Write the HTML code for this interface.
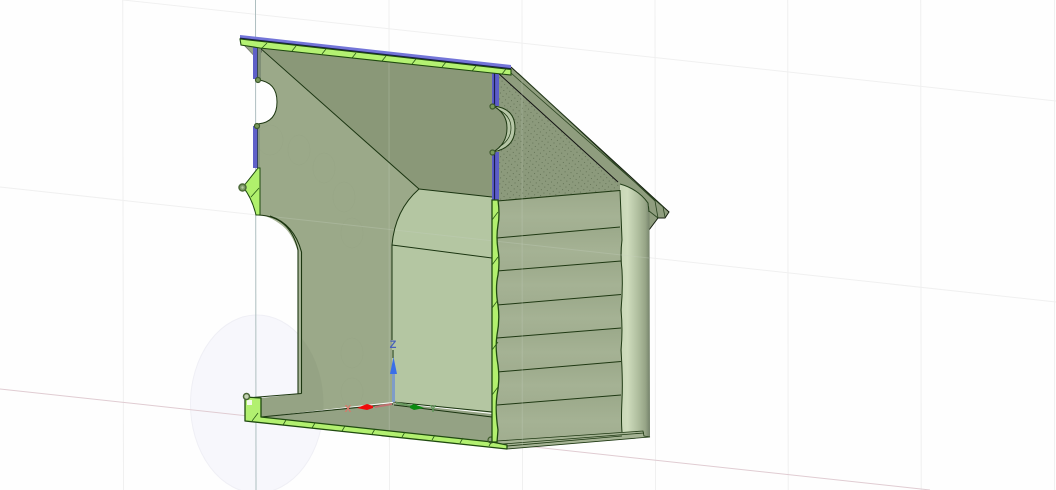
<!DOCTYPE html>
<html><head><meta charset="utf-8"><style>
html,body{margin:0;padding:0;background:#fefefe;width:1056px;height:490px;overflow:hidden}
svg{display:block}
text{font-family:"Liberation Sans",sans-serif;font-weight:bold}
</style></head><body>
<svg width="1056" height="490" viewBox="0 0 1056 490" xmlns="http://www.w3.org/2000/svg">
<defs>
<linearGradient id="post" x1="0" x2="1" y1="0" y2="0">
<stop offset="0" stop-color="#c8d6b6"/><stop offset=".25" stop-color="#cfdcbd"/><stop offset=".6" stop-color="#b0bf9f"/><stop offset=".85" stop-color="#96a486"/><stop offset="1" stop-color="#74826a"/>
</linearGradient>
<linearGradient id="sid" x1="0" x2="0" y1="0" y2="1">
<stop offset="0" stop-color="#9ba98a"/><stop offset=".55" stop-color="#a5b294"/><stop offset="1" stop-color="#a0ad8f"/>
</linearGradient>
<pattern id="dots" width="6" height="6" patternUnits="userSpaceOnUse" patternTransform="rotate(8)">
<rect width="6" height="6" fill="#8c9a7c"/><rect x="1" y="1" width="1" height="1" fill="#667558"/><rect x="4" y="4" width="1" height="1" fill="#667558"/>
</pattern>
<clipPath id="wallclip"><path d="M258 47L419 189Q395 210 392 245L392 402L261 417L261 398L298 394L298 250Q290 215 258 215L258 124Q277 122 277 102Q277 82 258 80Z"/></clipPath>
</defs>
<rect width="1056" height="490" fill="#fefefe"/>
<ellipse cx="257" cy="404" rx="66.500" ry="89" fill="#f7f7fc" stroke="#efeff5" stroke-width="1"/>
<g stroke="#f0f0f0" stroke-width="1" fill="none">
<line x1="122.700" y1="0" x2="123.500" y2="490"/>
<line x1="389" y1="0" x2="389.500" y2="490"/>
<line x1="522" y1="0" x2="522.500" y2="490"/>
<line x1="655" y1="0" x2="655.500" y2="490"/>
<line x1="787.700" y1="0" x2="788.200" y2="490"/>
<line x1="920.700" y1="0" x2="921.200" y2="490"/>
<line x1="1054.500" y1="0" x2="1054.500" y2="490"/>
<line x1="123" y1="0" x2="1056" y2="101"/>
<line x1="0" y1="187" x2="1056" y2="302"/>
</g>
<line x1="0" y1="389" x2="930" y2="490" stroke="#e0ccd2" stroke-width="1"/>
<line x1="255.500" y1="0" x2="256" y2="490" stroke="#aebfc0" stroke-width="1"/>

<!-- eave underside + roof -->
<path d="M511 67L669 212L665 218L658 218L649 230L649 205L620 186L498 74Z" fill="#8f9d7e"/>
<path d="M511 67L669 212L665 218L658 218L649 230" fill="none" stroke="#141e0e" stroke-width="1"/>
<path d="M511 73L663 207L665 217M518 73L655 201L658 218M649 211L658 218" fill="none" stroke="#2a4420" stroke-width=".8"/>

<!-- dotted gable -->
<path d="M497 73L620 183L620 191L498 201Z" fill="url(#dots)"/>
<path d="M498 73L618 182" fill="none" stroke="#111" stroke-width="1"/>

<!-- post -->
<path d="M620 184Q637 188 648 203L649.500 208L650 437L620 437Q624 310 620 184Z" fill="url(#post)"/>
<path d="M620 184Q638 189 648 203L649 212" fill="none" stroke="#24401a" stroke-width="1"/>

<!-- siding -->
<g fill="url(#sid)">
<path d="M497 201L620 190.500L622 227L497 238Z"/>
<path d="M497 238L622 227L622 261L497 271Z"/>
<path d="M497 271L622 261L622 294.500L497 305Z"/>
<path d="M497 305L622 294.500L622 328L497 338Z"/>
<path d="M497 338L622 328L622 361.500L497 372Z"/>
<path d="M497 372L622 361.500L622 395L497 405Z"/>
<path d="M497 405L622 395L622 433L497 443Z"/>
</g>
<path d="M620 190Q621 215 622 240Q620 255 622 270Q623 290 621 310Q623 330 621 350Q623 380 622 400Q621 420 622 432" fill="none" stroke="#203a14" stroke-width="1"/>
<g stroke="#1e3812" stroke-width="1" fill="none">
<line x1="497" y1="201" x2="620" y2="190.500"/>
<line x1="497" y1="238" x2="620" y2="227"/>
<line x1="497" y1="271" x2="621" y2="261"/>
<line x1="497" y1="305" x2="621" y2="294.500"/>
<line x1="497" y1="338" x2="621" y2="328"/>
<line x1="497" y1="372" x2="621" y2="361.500"/>
<line x1="497" y1="405" x2="621" y2="395"/>
</g>
<!-- base -->
<path d="M497 441L643 431L644 436L650 437L507 449L497 445Z" fill="#a5b394" stroke="#1e3812" stroke-width=".8"/>
<path d="M503 444L644 433M507 446L622 436" fill="none" stroke="#1e3812" stroke-width=".8"/>

<!-- left wall -->
<path d="M258 47L419 189Q395 210 392 245L392 402L261 417L261 398L298 394L298 250Q290 215 258 215L258 124Q277 122 277 102Q277 82 258 80Z" fill="#9ba989"/>
<ellipse cx="257" cy="404" rx="66.500" ry="89" fill="#000" fill-opacity=".035" clip-path="url(#wallclip)"/>
<!-- back wall -->
<path d="M260 48L492 72L492 197L419 189Z" fill="#8a9878"/>
<!-- notch filled with back wall colour -->
<path d="M491 105Q515 109 515 128Q515 148 491 153Z" fill="#8a9878"/>
<path d="M493 106Q515 108 515 128Q515 148 493 152Q507 144 507 128Q507 113 493 106Z" fill="#b6c6a6" stroke="#1e3812" stroke-width="1"/>
<path d="M499 110Q511 116 511 128Q511 140 499 147" fill="none" stroke="#1e3812" stroke-width=".7"/>
<!-- arch -->
<path d="M419 189L492 197L492 413L392 402L392 245Q395 210 419 189Z" fill="#b4c6a2"/>
<!-- floor -->
<path d="M261 417L393 403L492 414L492 442Z" fill="#94a284"/>

<!-- faint cell ellipses -->
<g fill="none" stroke="#8f9d7f" stroke-width=".5" stroke-opacity=".3">
<ellipse cx="270" cy="140" rx="13" ry="15"/><ellipse cx="299" cy="150" rx="11" ry="15"/><ellipse cx="324" cy="168" rx="11" ry="15"/><ellipse cx="344" cy="197" rx="11" ry="15"/><ellipse cx="352" cy="233" rx="11" ry="15"/><ellipse cx="352" cy="353" rx="11" ry="15"/><ellipse cx="352" cy="392" rx="11" ry="14"/>
</g>
<!-- grid lines through model -->
<g stroke="#c6d0c0" stroke-opacity=".3" stroke-width="1" fill="none">
<line x1="389" y1="60" x2="389.300" y2="440"/>
<line x1="522" y1="80" x2="522.300" y2="445"/>
<line x1="258" y1="215" x2="649" y2="258"/>
</g>

<!-- step shape -->
<path d="M298 251L301 251L301 394L298 394Z" fill="#aab79a"/>
<path d="M262 215Q272 215 284 224Q296 233 301 252L298 252Q292 232 280 224Q272 218 262 215Z" fill="#aab79a"/>
<path d="M258 215Q290 216 298 250L298 394M270 216Q294 224 301.500 252L301.500 393.500" fill="none" stroke="#1c3610" stroke-width="1.100"/>
<path d="M247 398L301.500 393.500" fill="none" stroke="#1c3610" stroke-width="1"/>
<path d="M258 124Q277 122 277 102Q277 82 258 80" fill="none" stroke="#1c3610" stroke-width="1"/>
<g stroke="#1a3410" stroke-width="1" fill="none">
<line x1="260" y1="48" x2="419" y2="189"/>
<line x1="419" y1="189" x2="492" y2="197"/>
<path d="M419 189Q395 210 392 245L392 340"/>
<line x1="392" y1="245" x2="492" y2="258"/>
<line x1="261" y1="417" x2="393" y2="404"/>
<line x1="393" y1="402" x2="492" y2="412"/>
<line x1="394" y1="405" x2="492" y2="417"/>
</g>

<!-- bottom plate -->
<path d="M245 397L261 398L261 417L492 442L507 445L507 449L245 421Z" fill="#b2f070" stroke="#1f4a0f" stroke-width="1.300" stroke-linejoin="round"/>
<rect x="247" y="400" width="5" height="5" fill="#f2fae8"/>
<g stroke="#2a5a16" stroke-width=".8">
<line x1="252" y1="421" x2="258" y2="413"/><line x1="283" y1="425" x2="286" y2="420"/><line x1="312" y1="428" x2="315" y2="423"/><line x1="342" y1="431" x2="345" y2="426"/><line x1="372" y1="434" x2="375" y2="429"/><line x1="402" y1="437" x2="405" y2="432"/><line x1="432" y1="440" x2="435" y2="435"/><line x1="460" y1="443" x2="463" y2="438"/><line x1="489" y1="446" x2="492" y2="441"/>
</g>
<circle cx="246.500" cy="396.500" r="3" fill="#c4d2b4" stroke="#4a6636" stroke-width="1.500"/>
<circle cx="491" cy="440" r="3" fill="none" stroke="#3b5a28" stroke-width="1.200"/>

<!-- left blue segments -->
<path d="M240 41L262 50L258 60Z" fill="#96a488" stroke="#333" stroke-width=".5"/>
<rect x="253" y="47" width="6" height="32" fill="#5f60c8"/>
<rect x="257" y="47" width="4" height="32" fill="#7f8e76"/>
<rect x="253" y="126" width="6" height="42" fill="#5f60c8"/>
<rect x="257.500" y="126" width="2.500" height="42" fill="#8a9a80"/>
<line x1="257.500" y1="47" x2="257.500" y2="79" stroke="#1a2a4a" stroke-width=".7"/>
<line x1="257.500" y1="126" x2="257.500" y2="168" stroke="#1a2a4a" stroke-width=".7"/>
<circle cx="258" cy="80" r="2.500" fill="#7a9a5a" stroke="#3e5a2e" stroke-width="1.200"/>
<circle cx="257" cy="126" r="2.500" fill="#7a9a5a" stroke="#3e5a2e" stroke-width="1.200"/>
<!-- left triangle -->
<path d="M258 168L243 187Q252 198 256 215L260 215L260 168Z" fill="#b0f06c" stroke="#1f4a0f" stroke-width="1"/>
<line x1="251" y1="197" x2="259" y2="188" stroke="#2a5a16" stroke-width=".8"/>
<circle cx="242.500" cy="187.500" r="3.500" fill="#7f9a68" stroke="#4d6a3a" stroke-width="1.500"/>
<circle cx="242.500" cy="187.500" r="1.200" fill="#b6c8a4"/>

<!-- right blue segments -->
<rect x="492" y="73" width="7" height="33" fill="#5c5dc8"/>
<line x1="494.500" y1="73" x2="494.500" y2="105" stroke="#1a1f50" stroke-width="1.200"/>
<rect x="492" y="152" width="7" height="48" fill="#5c5dc8"/>
<line x1="494.500" y1="152" x2="494.500" y2="200" stroke="#1a1f50" stroke-width="1.200"/>
<circle cx="492.500" cy="106.500" r="2.500" fill="#7a9a5a" stroke="#3e5a2e" stroke-width="1.200"/>
<circle cx="492.500" cy="152.500" r="2.500" fill="#7a9a5a" stroke="#3e5a2e" stroke-width="1.200"/>

<!-- right wavy green -->
<path d="M492 200L498 200Q500 215 498 225Q496 237 498 250Q500 262 498 275Q495 288 498 305Q500 320 497 335Q495 348 498 365Q500 380 497 395Q495 410 498 430L497 442L492 442Z" fill="#b2f06e" stroke="#1f4a0f" stroke-width="1.300"/>
<g stroke="#2a5a16" stroke-width=".8">
<line x1="492" y1="220" x2="498" y2="212"/><line x1="492" y1="265" x2="498" y2="257"/><line x1="492" y1="308" x2="498" y2="300"/><line x1="492" y1="350" x2="498" y2="342"/><line x1="492" y1="395" x2="498" y2="387"/>
</g>

<!-- top plate -->
<path d="M240 35L511 65L511 69L240 39Z" fill="#7375d8"/>
<path d="M240 38.500L511 69" stroke="#151a48" stroke-width="1.700"/>
<path d="M240 39L511 69.500L511 75L492 73L260 48L241 45Z" fill="#b4f272" stroke="#1f4a0f" stroke-width="1.100"/>
<g stroke="#2a5a16" stroke-width=".8">
<line x1="262" y1="48" x2="267" y2="43"/><line x1="292" y1="51" x2="296" y2="46"/><line x1="322" y1="54" x2="326" y2="49"/><line x1="352" y1="58" x2="356" y2="53"/><line x1="382" y1="61" x2="386" y2="56"/><line x1="412" y1="64" x2="416" y2="59"/><line x1="442" y1="67" x2="446" y2="62"/><line x1="472" y1="71" x2="476" y2="66"/><line x1="502" y1="74" x2="506" y2="69"/>
</g>

<!-- axes -->
<line x1="393" y1="350" x2="393" y2="358" stroke="#1a3410" stroke-width="1"/>
<rect x="392" y="370" width="3" height="32" fill="#7e9cc8"/>
<path d="M393.500 357L397 374L390 374Z" fill="#3a6fe8"/>
<text x="393" y="348" font-size="11" fill="#4a62b8" text-anchor="middle">Z</text>
<path d="M392 404L375 407" stroke="#c07070" stroke-width="2"/>
<path d="M357 408L367 404L373 406L373 408L367 410Z" fill="#f00a0a"/>
<text x="348" y="412" font-size="10" fill="#d8786a" text-anchor="middle">X</text>
<path d="M396 403L412 406" stroke="#6a9a60" stroke-width="2"/>
<path d="M424 408L414 404L410 406L410 408L414 410Z" fill="#0a8a10"/>
<text x="433" y="412" font-size="10" fill="#5f9a5a" text-anchor="middle">Y</text>
</svg>
</body></html>
